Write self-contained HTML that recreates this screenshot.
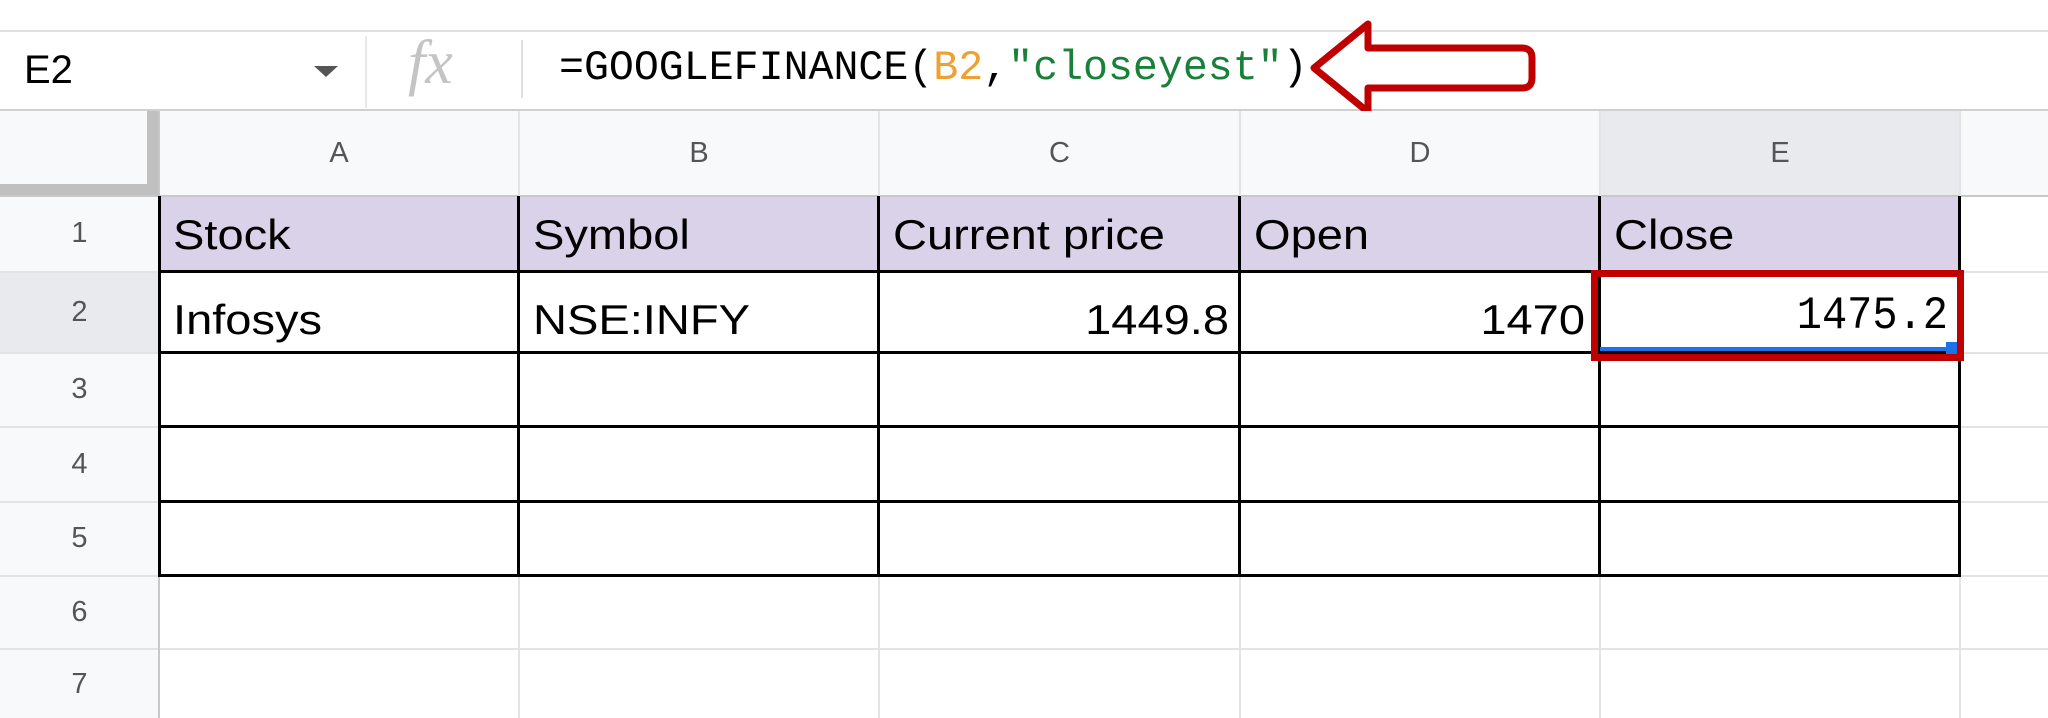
<!DOCTYPE html>
<html><head><meta charset="utf-8"><style>
*{margin:0;padding:0;box-sizing:border-box}
body{width:2048px;height:718px;background:#fff;position:relative;overflow:hidden;font-family:"Liberation Sans",Arial,sans-serif}
.a{position:absolute}
.hl{position:absolute;height:2px;background:#e2e3e3}
.vl{position:absolute;width:2px;background:#e2e3e3}
.bh{position:absolute;height:3px;background:#000}
.bv{position:absolute;width:3px;background:#000}
.t{position:absolute;font-size:42px;color:#000;line-height:1;transform:scaleX(1.12);transform-origin:left top;white-space:nowrap}
.r{transform-origin:right top;text-align:right}
.n{position:absolute;font-size:29px;color:#555;width:159px;text-align:center;line-height:1}
.c{position:absolute;font-size:29px;color:#555;text-align:center;line-height:1;top:139px}
</style></head><body>
<div class="hl" style="left:0;top:30px;width:2048px;background:#e0e0e0"></div>
<div class="hl" style="left:0;top:109px;width:2048px;background:#d0d0d0"></div>
<div class="a" style="left:24px;top:48px;font-size:40px;color:#000">E2</div>
<div class="a" style="left:314px;top:66px;width:0;height:0;border-left:12px solid transparent;border-right:12px solid transparent;border-top:11px solid #555"></div>
<div class="vl" style="left:365px;top:36px;height:72px;background:#e8e8e8"></div>
<div class="a" style="left:408px;top:28px;font-family:'Liberation Serif',serif;font-style:italic;font-size:62px;color:#c4c4c4">fx</div>
<div class="vl" style="left:521px;top:40px;height:58px;background:#e0e0e0"></div>
<div class="a" style="left:559px;top:44px;font-family:'Liberation Mono',monospace;font-size:42px;color:#000;transform:scaleX(0.99);transform-origin:left top;white-space:nowrap">=GOOGLEFINANCE(<span style="color:#f0a030">B2</span>,<span style="color:#188038">"closeyest"</span>)</div>
<svg class="a" style="left:1300px;top:18px" width="240" height="104" viewBox="0 0 240 104">
<path d="M14 50 L68 6 L68 30 L222 30 Q232 30 232 40 L232 60 Q232 70 222 70 L68 70 L68 94 Z" fill="none" stroke="#c00000" stroke-width="7" stroke-linejoin="round"/>
</svg>
<div class="a" style="left:0;top:111px;width:2048px;height:85px;background:#f8f9fa"></div>
<div class="a" style="left:1600px;top:111px;width:360px;height:85px;background:#e8eaed"></div>
<div class="a" style="left:0;top:196px;width:159px;height:522px;background:#f8f9fa"></div>
<div class="a" style="left:0;top:272px;width:159px;height:81px;background:#e8eaed"></div>
<div class="a" style="left:147px;top:111px;width:12px;height:85px;background:#c0c0c0"></div>
<div class="a" style="left:0;top:184px;width:159px;height:12px;background:#c0c0c0"></div>
<div class="a" style="left:159px;top:196px;width:1801px;height:76px;background:#d9d2e9"></div>
<div class="hl" style="left:0;top:195px;width:2048px;background:#c8c8c8"></div>
<div class="hl" style="left:0;top:271px;width:2048px"></div>
<div class="hl" style="left:0;top:352px;width:2048px"></div>
<div class="hl" style="left:0;top:426px;width:2048px"></div>
<div class="hl" style="left:0;top:501px;width:2048px"></div>
<div class="hl" style="left:0;top:575px;width:2048px"></div>
<div class="hl" style="left:0;top:648px;width:2048px"></div>
<div class="vl" style="left:158px;top:111px;height:607px;background:#c8c8c8"></div>
<div class="vl" style="left:518px;top:111px;height:607px"></div>
<div class="vl" style="left:878px;top:111px;height:607px"></div>
<div class="vl" style="left:1239px;top:111px;height:607px"></div>
<div class="vl" style="left:1599px;top:111px;height:607px"></div>
<div class="vl" style="left:1959px;top:111px;height:607px"></div>
<div class="bh" style="left:159px;top:270px;width:1802px"></div>
<div class="bh" style="left:159px;top:351px;width:1802px"></div>
<div class="bh" style="left:159px;top:425px;width:1802px"></div>
<div class="bh" style="left:159px;top:500px;width:1802px"></div>
<div class="bh" style="left:159px;top:574px;width:1802px"></div>
<div class="bv" style="left:158px;top:196px;height:381px"></div>
<div class="bv" style="left:517px;top:196px;height:381px"></div>
<div class="bv" style="left:877px;top:196px;height:381px"></div>
<div class="bv" style="left:1238px;top:196px;height:381px"></div>
<div class="bv" style="left:1598px;top:196px;height:381px"></div>
<div class="bv" style="left:1958px;top:196px;height:381px"></div>
<div class="c" style="left:159px;width:360px">A</div>
<div class="c" style="left:519px;width:360px">B</div>
<div class="c" style="left:879px;width:361px">C</div>
<div class="c" style="left:1240px;width:360px">D</div>
<div class="c" style="left:1600px;width:360px">E</div>
<div class="n" style="left:0;top:219px">1</div>
<div class="n" style="left:0;top:298px">2</div>
<div class="n" style="left:0;top:375px">3</div>
<div class="n" style="left:0;top:450px">4</div>
<div class="n" style="left:0;top:524px">5</div>
<div class="n" style="left:0;top:598px">6</div>
<div class="n" style="left:0;top:670px">7</div>
<div class="t" style="left:173px;top:214px">Stock</div>
<div class="t" style="left:533px;top:214px">Symbol</div>
<div class="t" style="left:893px;top:214px">Current price</div>
<div class="t" style="left:1254px;top:214px">Open</div>
<div class="t" style="left:1614px;top:214px">Close</div>
<div class="t" style="left:173px;top:299px">Infosys</div>
<div class="t" style="left:533px;top:299px">NSE:INFY</div>
<div class="t r" style="left:829px;top:299px;width:400px">1449.8</div>
<div class="t r" style="left:1185px;top:299px;width:400px">1470</div>
<div class="a" style="left:1600px;top:292px;width:348px;text-align:right;font-family:'Liberation Mono',monospace;font-size:42px;transform:scaleY(1.1);color:#000">1475.2</div>
<div class="a" style="left:1600px;top:347px;width:350px;height:4px;background:#1a73e8"></div>
<div class="a" style="left:1946px;top:342px;width:12px;height:12px;background:#1a73e8"></div>
<div class="a" style="left:1591px;top:270px;width:373px;height:91px;border:7px solid #c00000"></div>
</body></html>
